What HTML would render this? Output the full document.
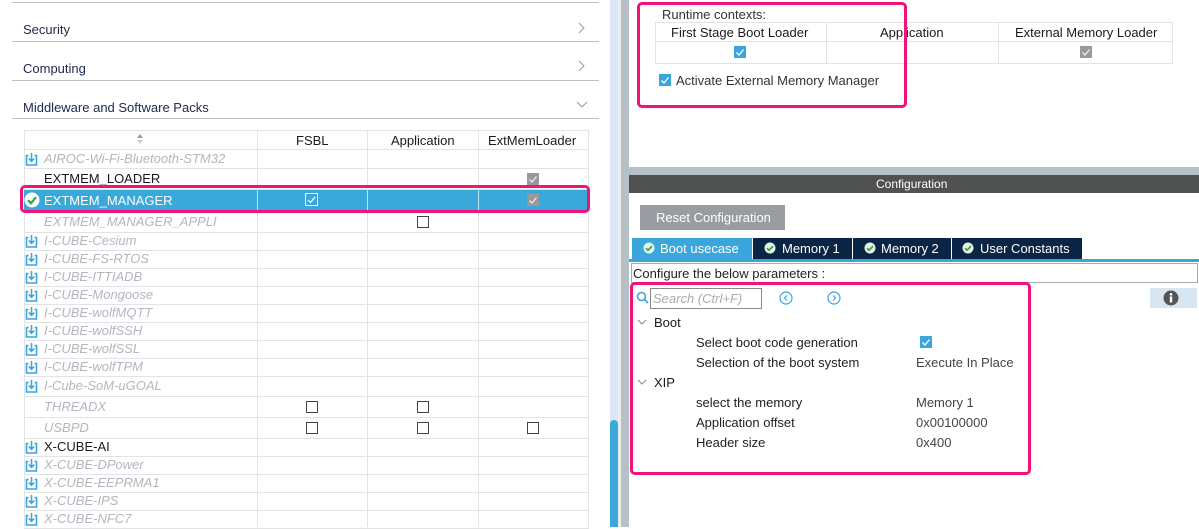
<!DOCTYPE html>
<html><head><meta charset="utf-8"><style>
*{margin:0;padding:0;box-sizing:border-box}
body{width:1199px;height:527px;overflow:hidden;background:#fff;font-family:"Liberation Sans",sans-serif;font-size:13px;color:#1a1a1a;position:relative}
.a{position:absolute}
.t{position:absolute;white-space:nowrap}
.hl{position:absolute;height:1px;background:#e3e3e3}
.vl{position:absolute;width:1px;background:#e3e3e3}
.g{color:#b3b6bf;font-style:italic}
.cb{position:absolute;width:12px;height:12px;border:1px solid #444;background:#fff}
.cg{position:absolute;width:12px;height:12px;background:#999}
.cbl{position:absolute;width:13px;height:13px;background:#3aa6dc}
.pink{position:absolute;border:3px solid #f0137a;border-radius:5px}
</style></head><body>
<div class="a" style="left:0;top:0;width:610px;height:527px;background:#fff"></div>
<div class="hl" style="left:12px;top:2px;width:587px;background:#bcc4cb"></div>
<div class="t" style="left:23px;top:22px;color:#222a50">Security</div>
<svg class="a" style="left:578px;top:22px" width="7" height="12"><path d="M1 1l5 5-5 5" fill="none" stroke="#999" stroke-width="1"/></svg>
<div class="hl" style="left:12px;top:41px;width:587px;background:#bcc4cb"></div>
<div class="t" style="left:23px;top:61px;color:#222a50">Computing</div>
<svg class="a" style="left:578px;top:60px" width="7" height="12"><path d="M1 1l5 5-5 5" fill="none" stroke="#999" stroke-width="1"/></svg>
<div class="hl" style="left:12px;top:80px;width:587px;background:#bcc4cb"></div>
<div class="t" style="left:23px;top:100px;color:#222a50">Middleware and Software Packs</div>
<svg class="a" style="left:576px;top:101px" width="12" height="7"><path d="M1 1l5 5 5-5" fill="none" stroke="#999" stroke-width="1"/></svg>
<div class="hl" style="left:12px;top:118px;width:587px;background:#bcc4cb"></div>

<div class="a" style="left:24px;top:130px;width:565px;height:397px;border:1px solid #e3e3e3;border-bottom:none"></div>
<div class="vl" style="left:257px;top:130px;height:397px"></div>
<div class="vl" style="left:367px;top:130px;height:397px"></div>
<div class="vl" style="left:478px;top:130px;height:397px"></div>
<svg class="a" style="left:136px;top:133px" width="8" height="12"><path d="M4 1L7 5H1z" fill="#999"/><path d="M4 11L7 7H1z" fill="#ccc"/></svg>
<div class="t" style="left:296px;top:133px">FSBL</div>
<div class="t" style="left:391px;top:133px">Application</div>
<div class="t" style="left:488px;top:133px">ExtMemLoader</div>
<div class="hl" style="left:24px;top:149px;width:565px"></div>

<div id="rows"></div>

<div class="a" style="left:24px;top:190px;width:563px;height:20px;background:#39a9dc"></div>
<div class="a" style="left:257px;top:190px;width:1px;height:20px;background:#bfe3f4"></div>
<div class="a" style="left:367px;top:190px;width:1px;height:20px;background:#bfe3f4"></div>
<div class="a" style="left:478px;top:190px;width:1px;height:20px;background:#bfe3f4"></div>
<svg class="a" style="left:24px;top:192px" width="16" height="16"><circle cx="8" cy="8" r="7.5" fill="#fff"/><path d="M4 8.2l3 3 5-6" fill="none" stroke="#2ea44f" stroke-width="2.2"/></svg>
<div class="t" style="left:44px;top:193px;color:#fff">EXTMEM_MANAGER</div>
<div class="a" style="left:305px;top:193px;width:13px;height:13px;border:1px solid #fff"></div>
<svg class="a" style="left:305px;top:193px" width="13" height="13"><path d="M3 7l2.5 2.5L10 4" fill="none" stroke="#fff" stroke-width="1.2"/></svg>
<div class="cg" style="left:527px;top:194px;background:#999"></div>
<svg class="a" style="left:527px;top:194px" width="12" height="12"><path d="M2.5 6.5l2.5 2.5L9.5 3.5" fill="none" stroke="#eee" stroke-width="1.2"/></svg>
<div class="pink" style="left:20px;top:185px;width:570px;height:28px"></div>

<div class="a" style="left:610px;top:0;width:8px;height:527px;background:#d9e8f4"></div>
<div class="a" style="left:610px;top:420px;width:8px;height:107px;background:#39a9dc;border-radius:4px 4px 0 0"></div>
<div class="a" style="left:618px;top:0;width:3px;height:527px;background:#ececec"></div>
<div class="a" style="left:621px;top:0;width:8px;height:527px;background:#b6c0c7"></div>

<div class="t" style="left:662px;top:7px;color:#333">Runtime contexts:</div>
<div class="a" style="left:655px;top:22px;width:518px;height:42px;border:1px solid #e3e3e3"></div>
<div class="hl" style="left:655px;top:41px;width:518px"></div>
<div class="vl" style="left:826px;top:22px;height:42px"></div>
<div class="vl" style="left:998px;top:22px;height:42px"></div>
<div class="t" style="left:671px;top:25px">First Stage Boot Loader</div>
<div class="t" style="left:880px;top:25px">Application</div>
<div class="t" style="left:1015px;top:25px">External Memory Loader</div>
<div class="cbl" style="left:734px;top:46px;width:12px;height:12px"></div>
<svg class="a" style="left:734px;top:46px" width="12" height="12"><path d="M2.5 6.5l2.5 2.5L9.5 3.5" fill="none" stroke="#fff" stroke-width="1.3"/></svg>
<div class="cg" style="left:1080px;top:46px;background:#9a9a9a"></div>
<svg class="a" style="left:1080px;top:46px" width="12" height="12"><path d="M2.5 6.5l2.5 2.5L9.5 3.5" fill="none" stroke="#eee" stroke-width="1.3"/></svg>
<div class="cbl" style="left:659px;top:74px;width:12px;height:12px"></div>
<svg class="a" style="left:659px;top:74px" width="12" height="12"><path d="M2.5 6.5l2.5 2.5L9.5 3.5" fill="none" stroke="#fff" stroke-width="1.3"/></svg>
<div class="t" style="left:676px;top:73px;color:#333">Activate External Memory Manager</div>
<div class="pink" style="left:637px;top:2px;width:270px;height:106px"></div>

<div class="a" style="left:629px;top:167px;width:570px;height:8px;background:#b6c0c7"></div>
<div class="a" style="left:629px;top:175px;width:570px;height:18px;background:#505251"></div>
<div class="t" style="left:876px;top:177px;color:#fff;font-size:12px">Configuration</div>
<div class="a" style="left:640px;top:205px;width:145px;height:25px;background:#999da1"></div>
<div class="t" style="left:656px;top:210px;color:#fff">Reset Configuration</div>

<div class="a" style="left:632px;top:238px;width:120px;height:21px;background:#3aa6dc"></div>
<div class="a" style="left:753px;top:238px;width:99px;height:21px;background:#0b2546"></div>
<div class="a" style="left:853px;top:238px;width:98px;height:21px;background:#0b2546"></div>
<div class="a" style="left:952px;top:238px;width:130px;height:21px;background:#0b2546"></div>
<div class="a" style="left:629px;top:259px;width:570px;height:3px;background:#3aa6dc"></div>
<svg class="a" style="left:643px;top:242px" width="12" height="12"><circle cx="6" cy="6" r="5.5" fill="#e6f3e6"/><path d="M3 6.2l2 2 4-4" fill="none" stroke="#2e9e4f" stroke-width="1.6"/></svg>
<div class="t" style="left:660px;top:241px;color:#fff">Boot usecase</div>
<svg class="a" style="left:764px;top:242px" width="12" height="12"><circle cx="6" cy="6" r="5.5" fill="#e6f3e6"/><path d="M3 6.2l2 2 4-4" fill="none" stroke="#2e9e4f" stroke-width="1.6"/></svg>
<div class="t" style="left:782px;top:241px;color:#fff">Memory 1</div>
<svg class="a" style="left:864px;top:242px" width="12" height="12"><circle cx="6" cy="6" r="5.5" fill="#e6f3e6"/><path d="M3 6.2l2 2 4-4" fill="none" stroke="#2e9e4f" stroke-width="1.6"/></svg>
<div class="t" style="left:881px;top:241px;color:#fff">Memory 2</div>
<svg class="a" style="left:962px;top:242px" width="12" height="12"><circle cx="6" cy="6" r="5.5" fill="#e6f3e6"/><path d="M3 6.2l2 2 4-4" fill="none" stroke="#2e9e4f" stroke-width="1.6"/></svg>
<div class="t" style="left:980px;top:241px;color:#fff">User Constants</div>

<div class="a" style="left:631px;top:263px;width:567px;height:20px;border:1px solid #aaa"></div>
<div class="t" style="left:633px;top:266px;color:#222">Configure the below parameters :</div>

<svg class="a" style="left:636px;top:291px" width="13" height="13"><circle cx="5.5" cy="5.5" r="4" fill="none" stroke="#3aa6dc" stroke-width="1.6"/><path d="M8.5 8.5l3.5 3.5" stroke="#3aa6dc" stroke-width="1.8"/></svg>
<div class="a" style="left:650px;top:288px;width:112px;height:21px;border:1px solid #888"></div>
<div class="t g" style="left:653px;top:291px;color:#aaa">Search (Ctrl+F)</div>
<svg class="a" style="left:779px;top:291px" width="14" height="14"><circle cx="7" cy="7" r="6" fill="none" stroke="#3aa6dc" stroke-width="1.2"/><path d="M8 4.5L5.5 7 8 9.5" fill="none" stroke="#3aa6dc" stroke-width="1.2"/></svg>
<svg class="a" style="left:827px;top:291px" width="14" height="14"><circle cx="7" cy="7" r="6" fill="none" stroke="#3aa6dc" stroke-width="1.2"/><path d="M6 4.5L8.5 7 6 9.5" fill="none" stroke="#3aa6dc" stroke-width="1.2"/></svg>
<div class="a" style="left:1150px;top:288px;width:47px;height:20px;background:#d8e6f2"></div>
<svg class="a" style="left:1163px;top:290px" width="16" height="16"><circle cx="8" cy="8" r="7.5" fill="#555"/><rect x="6.8" y="6.5" width="2.4" height="6" fill="#fff"/><circle cx="8" cy="4.3" r="1.3" fill="#fff"/></svg>

<svg class="a" style="left:637px;top:319px" width="10" height="7"><path d="M1 1l4 4 4-4" fill="none" stroke="#888"/></svg>
<div class="t" style="left:654px;top:315px">Boot</div>
<div class="t" style="left:696px;top:335px;color:#222">Select boot code generation</div>
<div class="cbl" style="left:920px;top:336px;width:12px;height:12px"></div>
<svg class="a" style="left:920px;top:336px" width="12" height="12"><path d="M2.5 6.5l2.5 2.5L9.5 3.5" fill="none" stroke="#fff" stroke-width="1.3"/></svg>
<div class="t" style="left:696px;top:355px;color:#222">Selection of the boot system</div>
<div class="t" style="left:916px;top:355px;color:#444">Execute In Place</div>
<svg class="a" style="left:637px;top:379px" width="10" height="7"><path d="M1 1l4 4 4-4" fill="none" stroke="#888"/></svg>
<div class="t" style="left:654px;top:375px">XIP</div>
<div class="t" style="left:696px;top:395px;color:#222">select the memory</div>
<div class="t" style="left:916px;top:395px;color:#444">Memory 1</div>
<div class="t" style="left:696px;top:415px;color:#222">Application offset</div>
<div class="t" style="left:916px;top:415px;color:#444">0x00100000</div>
<div class="t" style="left:696px;top:435px;color:#222">Header size</div>
<div class="t" style="left:916px;top:435px;color:#444">0x400</div>
<div class="pink" style="left:630px;top:282px;width:401px;height:193px"></div>

<script>
var I='<svg class="a" style="left:25px;top:TOPpx" width="13" height="14"><path d="M3.5 3.5H1.5V13H11.5V3.5H9.5" fill="none" stroke="#3aa6dc" stroke-width="1.6"/><path d="M6.5 1V9M3.8 6.5L6.5 9.3L9.2 6.5" fill="none" stroke="#3aa6dc" stroke-width="1.6"/></svg>';
var rows=[
[150,168,'AIROC-Wi-Fi-Bluetooth-STM32',1,1,0,0,0],
[168,189,'EXTMEM_LOADER',0,0,0,0,2],
[189,211,'',0,0,0,0,0],
[211,232,'EXTMEM_MANAGER_APPLI',0,1,0,1,0],
[232,250,'I-CUBE-Cesium',1,1],
[250,268,'I-CUBE-FS-RTOS',1,1],
[268,286,'I-CUBE-ITTIADB',1,1],
[286,304,'I-CUBE-Mongoose',1,1],
[304,322,'I-CUBE-wolfMQTT',1,1],
[322,340,'I-CUBE-wolfSSH',1,1],
[340,358,'I-CUBE-wolfSSL',1,1],
[358,376,'I-CUBE-wolfTPM',1,1],
[376,396,'I-Cube-SoM-uGOAL',1,1],
[396,417,'THREADX',0,1,1,1,0],
[417,438,'USBPD',0,1,1,1,1],
[438,456,'X-CUBE-AI',1,0],
[456,474,'X-CUBE-DPower',1,1],
[474,492,'X-CUBE-EEPRMA1',1,1],
[492,510,'X-CUBE-IPS',1,1],
[510,528,'X-CUBE-NFC7',1,1]];
var h='';
rows.forEach(function(r){
 var y=r[0],b=r[1],m=(y+b)/2;
 h+='<div class="hl" style="left:24px;top:'+b+'px;width:565px"></div>';
 if(r[2]){
  if(r[3])h+=I.replace('TOP',m-7);
  h+='<div class="t'+(r[4]?' g':'')+'" style="left:44px;top:'+(m-8)+'px">'+r[2]+'</div>';
 }
 if(r[5])h+='<div class="cb" style="left:306px;top:'+(m-6)+'px"></div>';
 if(r[6])h+='<div class="cb" style="left:417px;top:'+(m-6)+'px"></div>';
 if(r[7]==1)h+='<div class="cb" style="left:527px;top:'+(m-6)+'px"></div>';
 if(r[7]==2)h+='<div class="cg" style="left:527px;top:'+(m-6)+'px"></div><svg class="a" style="left:527px;top:'+(m-6)+'px" width="12" height="12"><path d="M2.5 6.5l2.5 2.5L9.5 3.5" fill="none" stroke="#eee" stroke-width="1.2"/></svg>';
});
document.getElementById('rows').innerHTML=h;
</script>
</body></html>
